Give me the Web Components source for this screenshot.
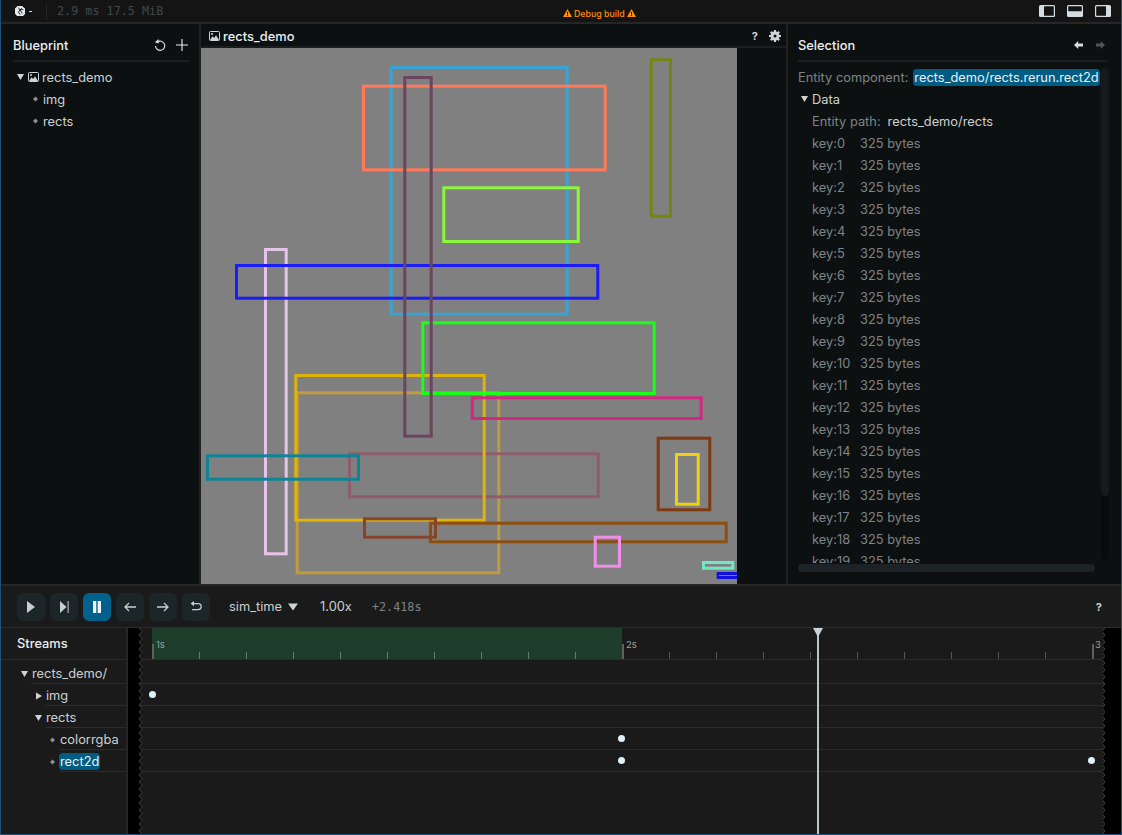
<!DOCTYPE html>
<html lang="en">
<head>
<meta charset="utf-8">
<title>rects_demo</title>
<style>
  html, body { margin: 0; background: #0d1011; }
  body { font-family: Inter, "Liberation Sans", sans-serif; font-size: 12.85px; }
</style>
</head>
<body>
<rr-app></rr-app>
<script>
/* Icon table. All drawn on their own little viewBox, stroke/fill per icon. */
const ICONS = {
  logo: { w: 12, h: 12, svg: `<path fill="#e6eaec" d="M3.5 1 8 1 11 3.6V9L9 11H3L1 8.6V3.4Z"/><path fill="none" stroke="#141414" stroke-width=".9" d="M4.4 2.6 8.4 8.6M7.8 3 4.4 7 6.2 9.6M6 4.8 9.4 4.6"/>` },
  image: { w: 11, h: 10, svg: `<rect x=".5" y=".5" width="10" height="9" rx="1" fill="none" stroke="#cfd4d6"/><path fill="#cfd4d6" d="M1 9 3.6 5.2 5.2 7 7 4.2 10 9Z"/><circle cx="3" cy="2.9" r="1" fill="#cfd4d6"/>` },
  reset: { w: 12, h: 12, svg: `<path fill="none" stroke="#d8dcde" stroke-width="1.2" d="M3.2 3.2A4.6 4.6 0 1 1 1.5 7"/><path fill="#d8dcde" d="M4.6 0 4.8 4.6 .8 3.2Z"/>` },
  plus: { w: 12, h: 12, svg: `<path stroke="#e8ecee" stroke-width="1.1" d="M6 0V12M0 6H12"/>` },
  gear: { w: 12, h: 12, svg: `<circle cx="6" cy="6" r="3.3" fill="none" stroke="#cfd4d6" stroke-width="2.4"/><path stroke="#cfd4d6" stroke-width="2.2" d="M6 0V12M0 6H12M1.8 1.8 10.2 10.2M10.2 1.8 1.8 10.2"/><circle cx="6" cy="6" r="1.5" fill="#0d1011"/>` },
  panelLeft: { w: 16, h: 12, svg: `<rect width="16" height="12" rx="1.5" fill="#d3dde2"/><rect x="5" y="1.2" width="9.8" height="9.6" rx=".6" fill="#141414"/>` },
  panelBottom: { w: 16, h: 12, svg: `<rect width="16" height="12" rx="1.5" fill="#d3dde2"/><rect x="1.2" y="1.2" width="13.6" height="5" rx=".6" fill="#141414"/>` },
  panelRight: { w: 16, h: 12, svg: `<rect width="16" height="12" rx="1.5" fill="#d3dde2"/><rect x="1.2" y="1.2" width="9.8" height="9.6" rx=".6" fill="#141414"/>` },
  warn: { w: 9, h: 8, svg: `<path fill="#ff8c00" fill-rule="evenodd" d="M4.5 0 9 8H0ZM4 2.8V5.4H5V2.8ZM4 6V7H5V6Z"/>` },
  play: { w: 8, h: 12, svg: `<path fill="#c7ced2" d="M0 0 8 6 0 12Z"/>` },
  step: { w: 9, h: 12, svg: `<path fill="#c7ced2" d="M0 0 6.5 6 0 12ZM7.6 0H8.6V12H7.6Z"/>` },
  pause: { w: 8, h: 12, svg: `<path fill="#f2f6f8" d="M0 0H3.3V12H0ZM4.7 0H8V12H4.7Z"/>` },
  arrowLeft: { w: 12, h: 10, svg: `<path fill="none" stroke="#c7ced2" stroke-width="1.3" d="M12 5H1M5 1 1 5 5 9"/>` },
  arrowRight: { w: 12, h: 10, svg: `<path fill="none" stroke="#c7ced2" stroke-width="1.3" d="M0 5H11M7 1 11 5 7 9"/>` },
  loop: { w: 12, h: 11, svg: `<path fill="none" stroke="#c7ced2" stroke-width="1.2" d="M2 2.6H8.2A2.9 2.9 0 0 1 8.2 8.6H2"/><path fill="#c7ced2" d="M4 0V5.2L.6 2.6Z"/>` },
  navBack: { w: 9, h: 8, svg: `<path fill="#d8dcde" d="M0 4 4.2 0V2.6H9V5.4H4.2V8Z"/>` },
  navNext: { w: 9, h: 8, svg: `<path fill="#4e5558" d="M9 4 4.8 0V2.6H0V5.4H4.8V8Z"/>` }
};

class RrIcon extends HTMLElement {
  connectedCallback() {
    const icon = ICONS[this.getAttribute('name')];
    this.attachShadow({ mode: 'open' }).innerHTML = `
      <style>:host { display: inline-flex; flex: none; line-height: 0; }</style>
      <svg width="${icon.w}" height="${icon.h}" viewBox="0 0 ${icon.w} ${icon.h}">${icon.svg}</svg>`;
  }
}

/* One tree line, shared by blueprint and streams. */
class RrTreeRow extends HTMLElement {
  connectedCallback() {
    const kind = this.getAttribute('kind') || 'dot';
    const marks = {
      down: '<path fill="#cfd4d6" d="M0 1H7L3.5 7Z"/>',
      right: '<path fill="#cfd4d6" d="M1 .5 7 4 1 7.5Z"/>',
      dot: '<path fill="#8a9194" d="M3.5 1.5 5.5 3.5 5.5 4.5 3.5 6.5 1.5 4.5 1.5 3.5Z"/>'
    };
    this.attachShadow({ mode: 'open' }).innerHTML = `
      <style>
        :host { display: flex; height: var(--row-h, 22px); padding-left: var(--indent, 0); color: #cbd0d2; }
        .mark { flex: none; width: 8px; display: flex; align-items: center; justify-content: center; margin-right: 3px; }
        .cell { flex: 1; display: flex; align-items: center; min-width: 0; box-sizing: border-box; }
        :host([line]) .cell { border-bottom: 1px solid #2c2c2c; padding-top: var(--cell-pad, 2px); }
        :host([line]) .mark { padding-top: var(--cell-pad, 2px); }
        span.text { padding: 1px 1px; border-radius: 4px; white-space: nowrap; }
        :host([selected]) span.text { background: #005c82; color: #e6f3f9; }
        ::slotted(rr-icon) { margin-right: 2px; margin-left: 1px; }
      </style>
      <div class="mark"><svg width="7" height="8" viewBox="0 0 7 8">${marks[kind]}</svg></div>
      <div class="cell"><slot></slot><span class="text">${this.getAttribute('label')}</span></div>`;
  }
}

class RrTopbar extends HTMLElement {
  connectedCallback() {
    this.attachShadow({ mode: 'open' }).innerHTML = `
      <style>
        :host { display: grid; grid-template-columns: 562px auto 1fr; align-items: center; height: 22px; background: #141414; border-bottom: 2px solid #262626; }
        .left { display: flex; align-items: center; height: 100%; padding-left: 13px; }
        .tiny { width: 3px; height: 1px; background: #cfd4d6; margin: 0 14px 0 3px; }
        .sep { width: 1px; height: 17px; background: #262626; margin-right: 10px; }
        .perf { font: 11.78px "DejaVu Sans Mono", monospace; color: #41484b; white-space: pre; }
        .debug { display: flex; align-items: center; gap: 2px; color: #ff8c00; font-size: 8.8px; font-weight: 500; padding-top: 4px; }
        .right { display: flex; justify-content: flex-end; gap: 12px; padding-right: 10px; }
      </style>
      <div class="left">
        <rr-icon name="logo"></rr-icon><div class="tiny"></div><div class="sep"></div>
        <div class="perf">2.9 ms 17.5 MiB</div>
      </div>
      <div class="debug"><rr-icon name="warn"></rr-icon>Debug build<rr-icon name="warn"></rr-icon></div>
      <div class="right">
        <rr-icon name="panelLeft"></rr-icon><rr-icon name="panelBottom"></rr-icon><rr-icon name="panelRight"></rr-icon>
      </div>`;
  }
}

/* Panel title with its rule underneath; icons go in the slot. */
class RrPanelHeader extends HTMLElement {
  connectedCallback() {
    this.attachShadow({ mode: 'open' }).innerHTML = `
      <style>
        :host { display: flex; align-items: center; justify-content: space-between; height: 30px; padding-top: 6px; border-bottom: 2px solid #1a1e20; color: #eceff0; font-weight: 500; }
        .tools { display: flex; align-items: center; }
      </style>
      <div>${this.getAttribute('title')}</div>
      <div class="tools"><slot></slot></div>`;
  }
}

class RrBlueprint extends HTMLElement {
  connectedCallback() {
    this.attachShadow({ mode: 'open' }).innerHTML = `
      <style>
        :host { display: block; background: #0d1011; padding: 0 10px 0 12px; }
        rr-tree-row { --indent: 3px; }
        rr-tree-row[kind=dot] { --indent: 18px; }
        .tree { margin-top: 4px; }
        rr-icon[name=plus] { margin-left: 10px; margin-right: 1px; }
      </style>
      <rr-panel-header title="Blueprint">
        <rr-icon name="reset"></rr-icon><rr-icon name="plus"></rr-icon>
      </rr-panel-header>
      <div class="tree">
        <rr-tree-row kind="down" label="rects_demo"><rr-icon name="image"></rr-icon></rr-tree-row>
        <rr-tree-row kind="dot" label="img"></rr-tree-row>
        <rr-tree-row kind="dot" label="rects"></rr-tree-row>
      </div>`;
  }
}

const RECTS = [
  [297.2, 392.8, 498.8, 572.8, '#c19b3e'],
  [349.5, 453.8, 598.2, 496.8, '#8f5c6b'],
  [295.8, 375.5, 484.2, 520.2, '#e0b30c'],
  [391.2, 67.5, 567.2, 314.2, '#3ba3d3'],
  [363.5, 86.2, 605.2, 169.8, '#ff7a58'],
  [443.8, 187.8, 578.2, 241.5, '#8cf83c'],
  [265.5, 249.5, 286.2, 553.8, '#e6c3e8'],
  [236.5, 265.5, 597.8, 298.2, '#1c1cf5'],
  [422.8, 322.8, 654.2, 393.5, '#18ff18'],
  [404.8, 77.5, 431.2, 436.2, '#6a4560'],
  [651.2, 59.8, 670.5, 216.2, '#728610'],
  [472.2, 397.8, 701.2, 418.5, '#cf2a80'],
  [207.5, 455.8, 358.5, 479.2, '#0e8496'],
  [430.5, 523.2, 726.2, 541.8, '#8c4f10'],
  [364.5, 518.8, 435.5, 537.2, '#84452c'],
  [658.2, 438.2, 709.8, 509.8, '#7f3a10'],
  [676.5, 454.5, 698.2, 504.2, '#f0d013'],
  [595.2, 537.2, 619.5, 566.2, '#f08ee8'],
  [703.5, 562.5, 732.8, 568.2, '#6fe8c4'],
  [718.2, 573.5, 745, 577.5, '#1010e0']
];

class RrViewport extends HTMLElement {
  connectedCallback() {
    // viewBox in window coordinates, so the numbers above read like the screen
    const shapes = RECTS.map(([x1, y1, x2, y2, c]) =>
      `<rect x="${x1}" y="${y1}" width="${x2 - x1}" height="${y2 - y1}" stroke="${c}"/>`).join('');
    this.attachShadow({ mode: 'open' }).innerHTML = `
      <style>
        :host { display: flex; flex-direction: column; background: #0d1011; color: #eceff0; }
        .tab { display: flex; align-items: center; height: 20px; padding: 2px 5px 0 8px; border-bottom: 2px solid #1a1e20; font-weight: 500; }
        .tab rr-icon[name=image] { margin-right: 3px; }
        .spacer { flex: 1; }
        .help { font-size: 11px; font-weight: 700; color: #cfd4d6; margin-right: 11px; }
        svg.scene { display: block; background: #808080; }
        svg.scene rect { fill: none; stroke-width: 3; }
      </style>
      <div class="tab">
        <rr-icon name="image"></rr-icon>rects_demo
        <div class="spacer"></div><div class="help">?</div><rr-icon name="gear"></rr-icon>
      </div>
      <svg class="scene" width="536" height="536" viewBox="201 48 536 536">${shapes}</svg>`;
  }
}

class RrSelection extends HTMLElement {
  connectedCallback() {
    let keys = '';
    for (let i = 0; i < 20; i++) keys += `<div class="kv"><span>key:${i}</span><span>325 bytes</span></div>`;
    this.attachShadow({ mode: 'open' }).innerHTML = `
      <style>
        :host { display: block; position: relative; background: #0d1011; padding: 0 13px 0 10px; color: #7d8487; overflow: hidden; }
        rr-icon[name=navNext] { margin-left: 13px; margin-right: 3px; }
        .body { height: 497px; margin-top: 4px; overflow: hidden; }
        .row { display: flex; align-items: center; height: 22px; white-space: nowrap; }
        .hl { background: #005c82; color: #e6f3f9; border-radius: 4px; padding: 1px; margin-left: 5px; }
        .data { color: #cbd0d2; }
        .data svg { margin: 0 4px 0 3px; }
        .path { padding-left: 14px; }
        .path b { font-weight: 400; color: #cbd0d2; margin-left: 7px; }
        .kv { display: grid; grid-template-columns: 48px auto; justify-content: start; align-items: center; height: 22px; padding-left: 14px; }
        .track { position: absolute; left: 313px; top: 44px; width: 8px; height: 492px; background: #090b0c; border-radius: 4px; }
        .thumb { height: 428px; background: #151b1d; border-radius: 4px; }
        .hbar { height: 8px; width: 297px; margin-top: 1px; background: #1c2225; border-radius: 4px; }
      </style>
      <rr-panel-header title="Selection">
        <rr-icon name="navBack"></rr-icon><rr-icon name="navNext"></rr-icon>
      </rr-panel-header>
      <div class="body">
        <div class="row">Entity component:<span class="hl">rects_demo/rects.rerun.rect2d</span></div>
        <div class="row data"><svg width="7" height="8" viewBox="0 0 7 8"><path fill="#cfd4d6" d="M0 1H7L3.5 7Z"/></svg>Data</div>
        <div class="row path">Entity path:<b>rects_demo/rects</b></div>
        ${keys}
      </div>
      <div class="hbar"></div>
      <div class="track"><div class="thumb"></div></div>`;
  }
}

class RrTransport extends HTMLElement {
  connectedCallback() {
    const btn = (name, on) => `<div class="btn${on ? ' on' : ''}"><rr-icon name="${name}"></rr-icon></div>`;
    this.attachShadow({ mode: 'open' }).innerHTML = `
      <style>
        :host { display: flex; align-items: center; gap: 5px; height: 41px; padding: 0 16px; background: #1a1a1a; border-top: 2px solid #262626; color: #cbd0d2; }
        .btn { width: 28px; height: 28px; border-radius: 6px; background: #1c2528; display: flex; align-items: center; justify-content: center; }
        .btn.on { background: #00628c; }
        .source { display: flex; align-items: center; gap: 6px; margin-left: 14px; }
        .speed { margin-left: 17px; }
        .delta { font: 11.78px "DejaVu Sans Mono", monospace; color: #7d8487; margin-left: 15px; }
        .spacer { flex: 1; }
        .help { font-size: 11px; font-weight: 700; margin-right: 3px; }
      </style>
      ${btn('play')}${btn('step')}${btn('pause', true)}${btn('arrowLeft')}${btn('arrowRight')}${btn('loop')}
      <div class="source">sim_time <svg width="10" height="8" viewBox="0 0 10 8"><path fill="#cfd4d6" d="M0 .5H10L5 7.5Z"/></svg></div>
      <div class="speed">1.00x</div>
      <div class="delta">+2.418s</div>
      <div class="spacer"></div>
      <div class="help">?</div>`;
  }
}

/* Black torn edge at either end of the time canvas. */
class RrTear extends HTMLElement {
  connectedCallback() {
    const right = this.getAttribute('side') === 'right';
    const w = right ? 19 : 15;
    // one tooth of the zigzag is 7px tall
    const edge = right ? 'M3 0 0 3.5 3 7' : 'M11 0 14 3.5 11 7';
    const fill = right ? `M3 0 0 3.5 3 7H${w}V0Z` : 'M0 0H11L14 3.5 11 7H0Z';
    this.attachShadow({ mode: 'open' }).innerHTML = `
      <style>
        :host { display: block; position: absolute; top: 0; bottom: 0; width: ${w}px; ${right ? 'right: 0' : 'left: 0'}; }
        svg { display: block; }
      </style>
      <svg width="${w}" height="100%">
        <defs><pattern id="tooth" width="${w}" height="7" patternUnits="userSpaceOnUse">
          <path d="${fill}" fill="#000"/><path d="${edge}" fill="none" stroke="#3c3c3c"/>
        </pattern></defs>
        <rect width="${w}" height="100%" fill="url(#tooth)"/>
      </svg>`;
  }
}

class RrTimeline extends HTMLElement {
  connectedCallback() {
    // all x values below are window coordinates; the canvas starts at 128
    const X0 = 128, STEP = 47, T1 = 152;
    let ticks = '';
    for (let i = 0; i <= 20; i++) {
      const x = T1 + i * STEP - X0;
      const major = i % 10 === 0;
      const cls = (major ? 'tick major' : 'tick') + (i < 10 ? ' in' : '');
      ticks += `<i class="${cls}" style="left:${x}px"></i>`;
    }
    const labels = [['1s', 156], ['2s', 626], ['3', 1095]].map(([t, x]) =>
      `<span class="lbl" style="left:${x - X0}px">${t}</span>`).join('');
    const dots = [[152, 694], [621, 738], [621, 760], [1091, 760]].map(([x, y]) =>
      `<i class="dot" style="left:${x - X0 - 3.5}px;top:${y - 628 - 3.5}px"></i>`).join('');
    this.attachShadow({ mode: 'open' }).innerHTML = `
      <style>
        :host { display: grid; grid-template-columns: 125px 2px 1fr; background: #1a1a1a; border-top: 1px solid #2c2c2c; min-height: 0; overflow: hidden; }
        .names { display: flex; flex-direction: column; }
        .streams { display: flex; align-items: center; height: 31px; padding-left: 16px; color: #eceff0; font-weight: 500; border-bottom: 1px solid #2c2c2c; flex: none; }
        .names rr-tree-row { --row-h: 22px; flex: none; }
        .names rr-tree-row.first { --row-h: 24px; --cell-pad: 3px; }
        .rule { background: #262626; }
        .canvas { position: relative; overflow: hidden; }
        .axis { height: 31px; border-bottom: 1px solid #2c2c2c; position: relative; }
        .range { position: absolute; left: ${T1 - X0}px; width: ${470}px; top: 0; bottom: 0; background: #1f3d2b; }
        .row { height: 21px; border-bottom: 1px solid #2c2c2c; }
        .row.first { height: 23px; }
        .tick { position: absolute; bottom: 0; width: 1px; height: 7px; background: #565656; }
        .tick.in { background: #62806c; }
        .tick.major { height: 15px; width: 1.5px; background: #5f5f5f; }
        .lbl { position: absolute; top: 11px; font-size: 9.5px; color: #9aa1a4; }
        .dot { position: absolute; width: 7px; height: 7px; border-radius: 50%; background: #dff0fa; }
        .cursor { position: absolute; left: ${817 - X0}px; top: 0; bottom: 0; width: 2px; background: #b9c6cd; }
        .head { position: absolute; left: ${813 - X0}px; top: 0; }
      </style>
      <div class="names">
        <div class="streams">Streams</div>
        <rr-tree-row class="first" kind="down" line label="rects_demo/" style="--indent:19px"></rr-tree-row>
        <rr-tree-row kind="right" line label="img" style="--indent:33px"></rr-tree-row>
        <rr-tree-row kind="down" line label="rects" style="--indent:33px"></rr-tree-row>
        <rr-tree-row line label="colorrgba" style="--indent:47px"></rr-tree-row>
        <rr-tree-row line selected label="rect2d" style="--indent:47px"></rr-tree-row>
      </div>
      <div class="rule"></div>
      <div class="canvas">
        <div class="axis"><div class="range"></div>${ticks}${labels}</div>
        <div class="row first"></div>
        <div class="row"></div><div class="row"></div><div class="row"></div><div class="row"></div>
        <rr-tear side="left"></rr-tear><rr-tear side="right"></rr-tear>
        ${dots}
        <div class="cursor"></div>
        <svg class="head" width="10" height="9" viewBox="0 0 10 9"><path fill="#c8d2d8" d="M0 0H10L5 9Z"/></svg>
      </div>`;
  }
}

class RrApp extends HTMLElement {
  connectedCallback() {
    this.attachShadow({ mode: 'open' }).innerHTML = `
      <style>
        :host {
          display: grid; box-sizing: border-box; width: 1122px; height: 835px;
          grid-template-rows: 24px 560px 43px 1fr;
          border: solid #1d4f78; border-width: 0 1px 1px 1px;
          font-family: Inter, "Liberation Sans", sans-serif; font-size: 12.85px; overflow: hidden;
        }
        .main { display: grid; grid-template-columns: 198px 2px 585px 2px 1fr; min-height: 0; }
        .split { background: #222; }
      </style>
      <rr-topbar></rr-topbar>
      <div class="main">
        <rr-blueprint></rr-blueprint><div class="split"></div>
        <rr-viewport></rr-viewport><div class="split"></div>
        <rr-selection></rr-selection>
      </div>
      <rr-transport></rr-transport>
      <rr-timeline></rr-timeline>`;
  }
}

customElements.define('rr-icon', RrIcon);
customElements.define('rr-tree-row', RrTreeRow);
customElements.define('rr-topbar', RrTopbar);
customElements.define('rr-panel-header', RrPanelHeader);
customElements.define('rr-blueprint', RrBlueprint);
customElements.define('rr-viewport', RrViewport);
customElements.define('rr-selection', RrSelection);
customElements.define('rr-transport', RrTransport);
customElements.define('rr-tear', RrTear);
customElements.define('rr-timeline', RrTimeline);
customElements.define('rr-app', RrApp);
</script>
</body>
</html>
